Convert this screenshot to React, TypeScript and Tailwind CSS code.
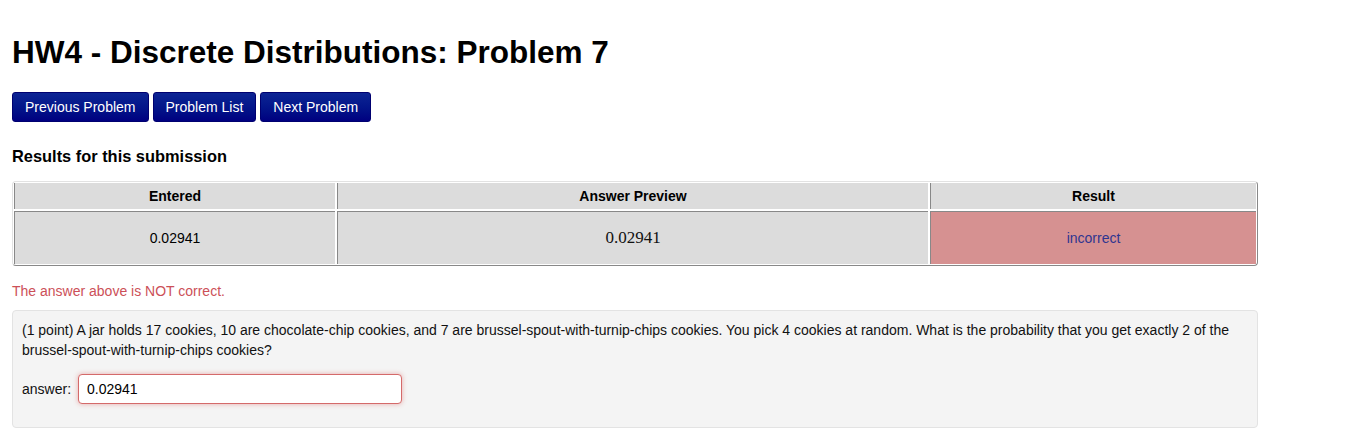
import React from 'react'

const navButtons = ['Previous Problem', 'Problem List', 'Next Problem']

export default function App() {
  return (
    <div className="min-h-[434px] bg-white pl-3 font-['Liberation_Sans',Arial,sans-serif] text-[14px] text-black">
      {/* Title */}
      <h1 className="pt-[33px] text-[31.5px] font-bold leading-[38px]">
        HW4 - Discrete Distributions: Problem 7
      </h1>

      {/* Nav buttons */}
      <div className="mt-[21px] flex gap-1">
        {navButtons.map((b) => (
          <button
            key={b}
            type="button"
            className="h-[30px] rounded-[3px] border border-[#000070] bg-gradient-to-b from-[#0d2494] to-[#000080] px-3 text-[14px] leading-[20px] text-white"
          >
            {b}
          </button>
        ))}
      </div>

      {/* Results */}
      <h3 className="mt-[24px] text-[16.4px] font-bold leading-[20px]">Results for this submission</h3>

      <div className="mt-[15px] w-[1246px] rounded-[4px] border border-[#e2e2e2] border-b-[#888] border-r-[#888] p-[1px]">
        <div className="grid grid-cols-[321px_591px_326px] gap-[2px]">
          {['Entered', 'Answer Preview', 'Result'].map((h) => (
            <div
              key={h}
              className="flex h-[26px] items-center justify-center border-l border-l-[#888] bg-[#dcdcdc] text-[14px] font-bold"
            >
              {h}
            </div>
          ))}
          <div className="flex h-[53px] items-center justify-center border-l border-t border-l-[#888] border-t-[#888] bg-[#dcdcdc] text-[14px]">
            0.02941
          </div>
          <div className="flex h-[53px] items-center justify-center border-l border-t border-l-[#888] border-t-[#888] bg-[#dcdcdc] font-['Liberation_Serif','Times_New_Roman',serif] text-[17px] text-[#111]">
            0.02941
          </div>
          <div className="flex h-[53px] items-center justify-center border-l border-t border-l-[#888] border-t-[#888] bg-[#d69191] text-[14px] text-[#2f3590]">
            incorrect
          </div>
        </div>
      </div>

      <p className="mt-[15px] text-[14px] leading-[20px] text-[#cc5058]">The answer above is NOT correct.</p>

      {/* Problem */}
      <div className="mt-[9px] w-[1246px] rounded-[4px] border border-[#e3e3e3] bg-[#f4f4f4] px-[9px] pb-[23px] pt-[9px] text-[14px] leading-[20px] text-[#111]">
        <p>
          (1 point) A jar holds 17 cookies, 10 are chocolate-chip cookies, and 7 are brussel-spout-with-turnip-chips cookies. You pick 4 cookies at random. What is the probability that you get exactly 2 of the brussel-spout-with-turnip-chips cookies?
        </p>
        <div className="mt-[14px] flex items-center gap-[7px]">
          <span>answer:</span>
          <input
            type="text"
            readOnly
            value="0.02941"
            className="h-[30px] w-[324px] rounded-[4px] border border-[#d46a6a] bg-white px-2 text-[14px] text-black shadow-[0_0_5px_rgba(217,83,79,0.45)] outline-none"
          />
        </div>
      </div>
    </div>
  )
}
